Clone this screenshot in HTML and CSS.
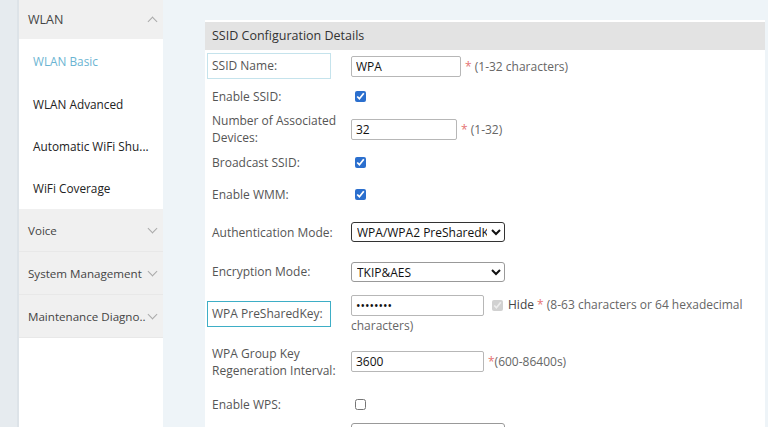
FILE: index.html
```html
<!DOCTYPE html>
<html>
<head>
    <title>WLAN Basic</title>
    <meta charset="UTF-8">
    <link rel="stylesheet" href="styles.css">
</head>
<body>
    <div class="page">
        <div class="edge"></div>

        <div class="sidebar">
            <div class="menu-head">WLAN <span class="chev up"></span></div>
            <div class="submenu">
                <div class="sub active">WLAN Basic</div>
                <div class="sub">WLAN Advanced</div>
                <div class="sub">Automatic WiFi Shu...</div>
                <div class="sub">WiFi Coverage</div>
            </div>
            <div class="menu-head closed">Voice <span class="chev"></span></div>
            <div class="menu-head closed">System Management <span class="chev"></span></div>
            <div class="menu-head closed">Maintenance Diagno.. <span class="chev"></span></div>
        </div>

        <div class="main">
            <div class="panel">
                <div class="panel-title">SSID Configuration Details</div>

                <div class="row h30">
                    <div class="label boxed">SSID Name:</div>
                    <div class="value"><input class="txt w110" type="text" value="WPA"> <span class="hint"><span class="req">*</span> (1-32 characters)</span></div>
                </div>
                <div class="row h30">
                    <div class="label">Enable SSID:</div>
                    <div class="value"><input class="chk" type="checkbox" checked></div>
                </div>
                <div class="row h36">
                    <div class="label">Number of Associated Devices:</div>
                    <div class="value"><input class="txt w106" type="text" value="32"> <span class="hint"><span class="req">*</span> (1-32)</span></div>
                </div>
                <div class="row h30">
                    <div class="label">Broadcast SSID:</div>
                    <div class="value"><input class="chk" type="checkbox" checked></div>
                </div>
                <div class="row h35">
                    <div class="label">Enable WMM:</div>
                    <div class="value"><input class="chk" type="checkbox" checked></div>
                </div>
                <div class="row h40">
                    <div class="label">Authentication Mode:</div>
                    <div class="value">
                        <select class="sel focus">
                            <option>WPA/WPA2 PreSharedKey</option>
                        </select>
                    </div>
                </div>
                <div class="row h39">
                    <div class="label">Encryption Mode:</div>
                    <div class="value">
                        <select class="sel">
                            <option>TKIP&amp;AES</option>
                        </select>
                    </div>
                </div>
                <div class="row h47 top">
                    <div class="label boxed teal">WPA PreSharedKey:</div>
                    <div class="value wrap">
                        <input class="txt w133" type="password" value="12345678"><input class="chk hide" type="checkbox" checked disabled><span class="hide-lbl">Hide</span> <span class="req">*</span> (8-63 characters or 64 hexadecimal characters)
                    </div>
                </div>
                <div class="row h47">
                    <div class="label">WPA Group Key Regeneration Interval:</div>
                    <div class="value"><input class="txt w133" type="text" value="3600"> <span class="hint"><span class="req">*</span>(600-86400s)</span></div>
                </div>
                <div class="row h38">
                    <div class="label">Enable WPS:</div>
                    <div class="value"><input class="chk" type="checkbox"></div>
                </div>
                <div class="row last">
                    <div class="label"></div>
                    <div class="value">
                        <select class="sel">
                            <option>PBC</option>
                        </select>
                    </div>
                </div>
            </div>
        </div>
    </div>
</body>
</html>
```

FILE: styles.css
```css
html, body { margin: 0; padding: 0; height: 100%; }
body { font-family: "Open Sans", "Noto Sans", sans-serif; font-size: 12px; color: #555; background: #eef4f8; overflow: hidden; }

.page { display: flex; height: 100%; overflow: hidden; }
.edge { width: 17px; background: #e6ebef; border-right: 2px solid #dde3e8; }

/* left menu */
.sidebar { width: 144px; background: #fff; flex-shrink: 0; }
.menu-head {
    height: 39px;
    display: flex;
    align-items: center;
    justify-content: space-between;
    padding: 0 6px 0 9px;
    background: #f0f0f0;
    color: #444;
    font-size: 12.5px;
    white-space: nowrap;
}
.menu-head.closed { height: 42px; border-bottom: 1px solid #e8e8e8; font-size: 11.6px; }
.sub { height: 42px; line-height: 42px; padding-left: 14px; color: #222; font-size: 11.8px; white-space: nowrap; }
.sub:first-child { height: 44px; line-height: 44px; }
.sub.active { color: #6ab4d2; }
.chev { flex-shrink: 0; width: 6px; height: 6px; border-right: 1.2px solid #aaa; border-bottom: 1.2px solid #aaa; transform: rotate(45deg); margin-top: -4px; margin-right: 1px; }
.chev.up { transform: rotate(-135deg); margin-top: 4px; }

/* content */
.main { flex: 1; padding: 20px 3px 0 42px; overflow: hidden; }
.panel { background: #fff; padding: 2px 0 0 0; height: 100%; }
.panel-title { background: #e3e3e3; height: 28px; line-height: 28px; padding-left: 7px; color: #333; font-size: 12.5px; margin-bottom: 1px; }

.row { display: flex; align-items: center; padding-left: 2px; }
.row.top { align-items: flex-start; }
.row.last { align-items: flex-start; height: 30px; }
.h30 { height: 30px; }
.h35 { height: 35px; }
.h36 { height: 36px; }
.h38 { height: 38px; }
.h39 { height: 39px; }
.h40 { height: 40px; }
.h47 { height: 47px; }

.label { width: 134px; padding-left: 5px; margin-right: 5px; line-height: 17px; color: #555; }
.label.boxed { box-sizing: border-box; width: 124px; height: 26px; line-height: 24px; padding-left: 4px; border: 1px solid #c5e3ec; margin-right: 20px; }
.label.teal { border-color: #3eaec6; border-width: 1.5px; margin-top: 10px; }
.value { flex: 1; display: flex; align-items: center; color: #666; }
.value.wrap { display: block; line-height: 20px; margin-top: 4px; padding-right: 8px; }

.txt { font-family: inherit; font-size: 12px; color: #111; height: 21px; box-sizing: border-box; padding: 0 4px; border: 1px solid #b7b7b7; border-radius: 2px; margin: 0; vertical-align: middle; }
.w106 { width: 106px; }
.w110 { width: 110px; }
.w133 { width: 133px; }

.sel { font-family: inherit; font-size: 12px; color: #111; width: 154px; height: 20px; border: 1px solid #999; border-radius: 3px; background: #fff; padding: 0 1px; }
.sel.focus { border: 1.5px solid #333; }

.chk { width: 11px; height: 11px; margin: 0 0 0 4px; accent-color: #2b6fce; }
.chk.hide { margin: 0 5px 0 8px; vertical-align: middle; }
.hide-lbl { color: #444; }
.hint { margin-left: 4px; color: #666; }
.req { color: #e57373; }
```
